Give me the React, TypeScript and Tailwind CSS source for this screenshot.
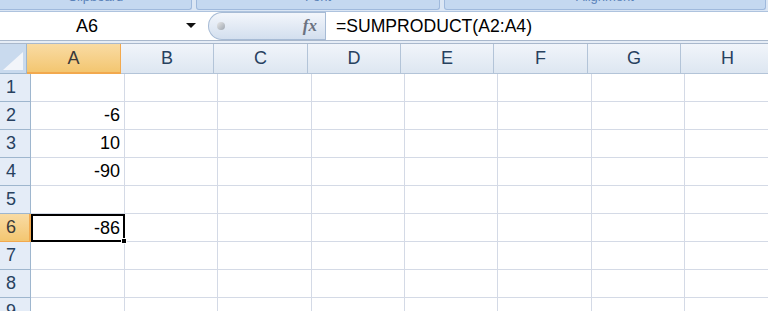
import React from "react";

const COLS = ["A", "B", "C", "D", "E", "F", "G", "H"];
const COL_W = [94, 93, 94, 93, 93, 94, 93, 94];
const ROWS = [1, 2, 3, 4, 5, 6, 7, 8, 9];
const DATA: Record<string, string> = { A2: "-6", A3: "10", A4: "-90", A6: "-86" };

const font = { fontFamily: '"Liberation Sans", Arial, sans-serif' };

function RibbonStrip() {
  return (
    <div className="flex h-[12px] bg-[#dbe6f4] border-b border-[#aec3de]">
      <div className="w-[192px] h-[10px] overflow-hidden bg-[#c4d8f0] border-b border-r border-[#9fb9dc] rounded-br-[3px] flex justify-center">
        <span className="text-[13px] leading-[14px] -mt-[10px] text-[#5a82b8]">Clipboard</span>
      </div>
      <div className="w-[4px]" />
      <div className="w-[244px] h-[10px] overflow-hidden bg-[#c4d8f0] border-b border-x border-[#9fb9dc] rounded-b-[3px] flex justify-center">
        <span className="text-[13px] leading-[14px] -mt-[10px] text-[#5a82b8]">Font</span>
      </div>
      <div className="w-[4px]" />
      <div className="w-[322px] h-[10px] overflow-hidden bg-[#c4d8f0] border-b border-x border-[#9fb9dc] rounded-b-[3px] flex justify-center">
        <span className="text-[13px] leading-[14px] -mt-[10px] text-[#5a82b8]">Alignment</span>
      </div>
    </div>
  );
}

function FormulaBar() {
  return (
    <div className="flex h-[28px] bg-white">
      <div className="w-[200px] flex items-center">
        <span className="flex-1 text-center text-[18px] text-black pr-[12px]">A6</span>
        <svg width="10" height="6" className="mr-[4px]" viewBox="0 0 10 6">
          <path d="M0 0 L10 0 L5 5 Z" fill="#111" />
        </svg>
      </div>
      <div className="w-[8px]" />
      <div className="w-[117px] h-[28px] rounded-l-[14px] border border-r-0 border-[#a7bbd5] bg-gradient-to-b from-[#f3f6fb] to-[#d3dfee] flex items-center">
        <span className="ml-[8px] w-[8px] h-[8px] rounded-full bg-gradient-to-br from-[#e8e8e8] to-[#9ea6b0]" />
        <span className="flex-1" />
        <span
          className="mr-[8px] text-[17px] italic font-bold text-[#6b7280]"
          style={{ fontFamily: '"Liberation Serif", "Times New Roman", serif' }}
        >
          fx
        </span>
      </div>
      <div className="w-[1px] bg-[#a7bbd5]" />
      <div className="flex-1 flex items-center pl-[10px] text-[17.6px] text-black">=SUMPRODUCT(A2:A4)</div>
    </div>
  );
}

function Grid() {
  return (
    <div className="flex flex-col">
      {/* header row */}
      <div className="flex h-[30px]">
        <div className="w-[31px] bg-[#c9daee] border-r border-b border-[#9eb6ce] flex items-end justify-end p-[3px]">
          <svg width="20" height="18" viewBox="0 0 20 18">
            <path d="M20 0 L20 18 L0 18 Z" fill="#f2f5fa" />
          </svg>
        </div>
        {COLS.map((c, i) =>
          c === "A" ? (
            <div
              key={c}
              style={{ width: COL_W[i] }}
              className="shrink-0 flex items-center justify-center bg-gradient-to-b from-[#f9dba3] to-[#f3c670] border-r border-b-2 border-[#f2a94e] text-[18px] text-[#3a3a3a]"
            >
              {c}
            </div>
          ) : (
            <div
              key={c}
              style={{ width: COL_W[i] }}
              className="shrink-0 flex items-center justify-center bg-gradient-to-b from-[#f1f5fa] to-[#dde6f1] border-r border-b border-[#b3c4d8] text-[18px] text-[#27415f]"
            >
              {c}
            </div>
          )
        )}
      </div>
      {ROWS.map((r) => (
        <div key={r} className="flex h-[28px]">
          <div
            className={
              r === 6
                ? "w-[31px] shrink-0 flex items-center pl-[6px] bg-gradient-to-b from-[#f9dba3] to-[#f3c670] border-r-2 border-b border-[#f2a94e] text-[18px] text-[#3a3a3a]"
                : "w-[31px] shrink-0 flex items-center pl-[6px] bg-[#e4ecf7] border-r border-b border-[#9eb6ce] text-[18px] text-[#27415f]"
            }
          >
            {r}
          </div>
          {COLS.map((c, i) => {
            const key = `${c}${r}`;
            const sel = key === "A6";
            return (
              <div
                key={key}
                style={{ width: COL_W[i] }}
                className={
                  sel
                    ? "shrink-0 relative flex items-center justify-end pr-[3px] border-2 border-black text-[18px] text-black"
                    : "shrink-0 flex items-center justify-end pr-[4px] border-r border-b border-[#d4dae6] text-[18px] text-black"
                }
              >
                {DATA[key] ?? ""}
                {sel && (
                  <span className="absolute -right-[4px] -bottom-[4px] w-[6px] h-[6px] bg-black border border-white" />
                )}
              </div>
            );
          })}
        </div>
      ))}
    </div>
  );
}

export default function App() {
  return (
    <div className="w-[768px] h-[311px] overflow-hidden bg-white" style={font}>
      <RibbonStrip />
      <FormulaBar />
      <div className="h-[4px] border-t border-b border-[#a9b8cc] bg-[#e6edf6]" />
      <Grid />
    </div>
  );
}
